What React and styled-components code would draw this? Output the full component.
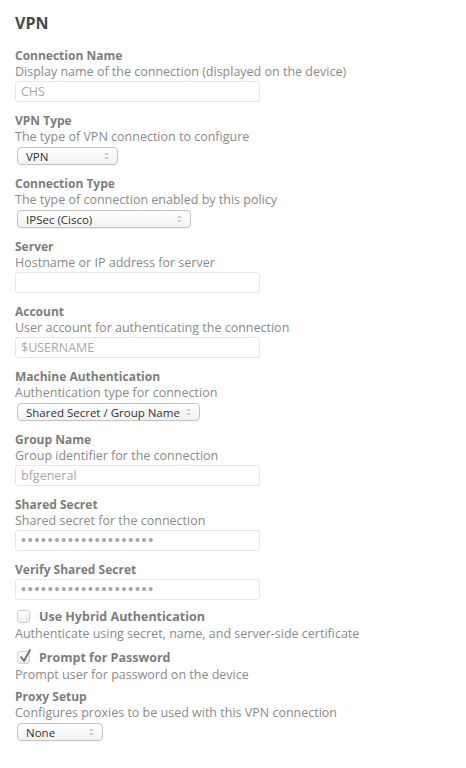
import React from "react";
import styled, { createGlobalStyle } from "styled-components";

const GlobalStyle = createGlobalStyle`
  html, body {
    margin: 0;
    padding: 0;
    background: #ffffff;
  }
  body {
    font-family: "Open Sans", "Liberation Sans", sans-serif;
  }
`;

const Page = styled.div`
  padding: 11px 15px 20px 15px;
  width: 436px;
`;

const Title = styled.h2`
  margin: 0 0 13px 0;
  font-size: 16px;
  line-height: 24px;
  font-weight: 700;
  color: #454a52;
`;

const Field = styled.div`
  display: flex;
  flex-direction: column;
  align-items: flex-start;
  margin-bottom: ${(p) => p.$gap ?? 11}px;
`;

const Label = styled.div`
  font-size: 12px;
  line-height: 16px;
  font-weight: 700;
  color: #7d7d7d;
`;

const Desc = styled.div`
  font-size: 12.5px;
  line-height: 16px;
  color: #8a8a8a;
`;

const TextInput = styled.div`
  box-sizing: border-box;
  width: 245px;
  height: 21px;
  margin-top: 1px;
  padding: 0 5px;
  border: 1px solid #e6e6e6;
  border-radius: 3px;
  font-size: 12.5px;
  line-height: 19px;
  color: #a9a9a9;
  background: #fff;
`;

const Dots = styled.span`
  font-family: "Liberation Sans", sans-serif;
  font-size: 14px;
  letter-spacing: 1.8px;
  color: #a6a6a6;
`;

const Select = styled.div`
  box-sizing: border-box;
  display: flex;
  align-items: center;
  justify-content: space-between;
  width: ${(p) => p.$w}px;
  height: 18px;
  margin: 2px 0 0 2px;
  padding: 0 8px 0 8px;
  border: 1px solid #c4c4c4;
  border-radius: 4px;
  background: linear-gradient(#ffffff, #f1f1f1);
  box-shadow: 0 1px 0 rgba(0, 0, 0, 0.04);
  font-size: 11.5px;
  color: #333;
`;

const CheckRow = styled.div`
  display: flex;
  align-items: center;
  gap: 9px;
  height: 19px;
  padding-left: 2px;
  margin-top: ${(p) => p.$top || 0}px;
`;

const Box = styled.span`
  box-sizing: border-box;
  position: relative;
  width: 13px;
  height: 13px;
  border: 1px solid #cfcfcf;
  border-radius: 3px;
  background: linear-gradient(#ffffff, #ececec);
`;

const Tick = styled.svg`
  position: absolute;
  left: 1px;
  top: -4px;
`;

const CheckLabel = styled.span`
  font-size: 12.5px;
  font-weight: 700;
  color: #7d7d7d;
`;

const Arrows = () => (
  <svg width="5" height="8" viewBox="0 0 5 8">
    <path d="M0.8 3 L2.5 1.2 L4.2 3" fill="none" stroke="#9a9a9a" strokeWidth="0.9" />
    <path d="M0.8 5 L2.5 6.8 L4.2 5" fill="none" stroke="#9a9a9a" strokeWidth="0.9" />
  </svg>
);

const dots = "•".repeat(20);

const InputField = ({ label, desc, value, secret, gap }) => (
  <Field $gap={gap}>
    <Label>{label}</Label>
    {desc && <Desc>{desc}</Desc>}
    <TextInput>{secret ? <Dots>{dots}</Dots> : value}</TextInput>
  </Field>
);

const SelectField = ({ label, desc, value, w }) => (
  <Field>
    <Label>{label}</Label>
    <Desc>{desc}</Desc>
    <Select $w={w}>
      <span>{value}</span>
      <Arrows />
    </Select>
  </Field>
);

const Check = ({ label, checked, top }) => (
  <CheckRow $top={top}>
    <Box>
      {checked && (
        <Tick width="13" height="16" viewBox="0 0 13 16">
          <path d="M2 9 L5 13 L11 2" fill="none" stroke="#6e6e6e" strokeWidth="1.8" strokeLinecap="round" strokeLinejoin="round" />
        </Tick>
      )}
    </Box>
    <CheckLabel>{label}</CheckLabel>
  </CheckRow>
);

const App = () => {
  return (
    <Page>
      <GlobalStyle />
      <Title>VPN</Title>
      <InputField
        label="Connection Name"
        desc="Display name of the connection (displayed on the device)"
        value="CHS"
      />
      <SelectField
        label="VPN Type"
        desc="The type of VPN connection to configure"
        value="VPN"
        w={101}
      />
      <SelectField
        label="Connection Type"
        desc="The type of connection enabled by this policy"
        value="IPSec (Cisco)"
        w={174}
      />
      <InputField label="Server" desc="Hostname or IP address for server" value="" />
      <InputField
        label="Account"
        desc="User account for authenticating the connection"
        value="$USERNAME"
      />
      <SelectField
        label="Machine Authentication"
        desc="Authentication type for connection"
        value="Shared Secret / Group Name"
        w={183}
      />
      <InputField
        label="Group Name"
        desc="Group identifier for the connection"
        value="bfgeneral"
      />
      <InputField
        label="Shared Secret"
        desc="Shared secret for the connection"
        secret
      />
      <InputField label="Verify Shared Secret" secret gap={7} />
      <Check label="Use Hybrid Authentication" />
      <Desc>Authenticate using secret, name, and server-side certificate</Desc>
      <Check label="Prompt for Password" checked top={6} />
      <Field $gap={6}>
        <Desc>Prompt user for password on the device</Desc>
      </Field>
      <SelectField
        label="Proxy Setup"
        desc="Configures proxies to be used with this VPN connection"
        value="None"
        w={86}
      />
    </Page>
  );
};

export default App;
